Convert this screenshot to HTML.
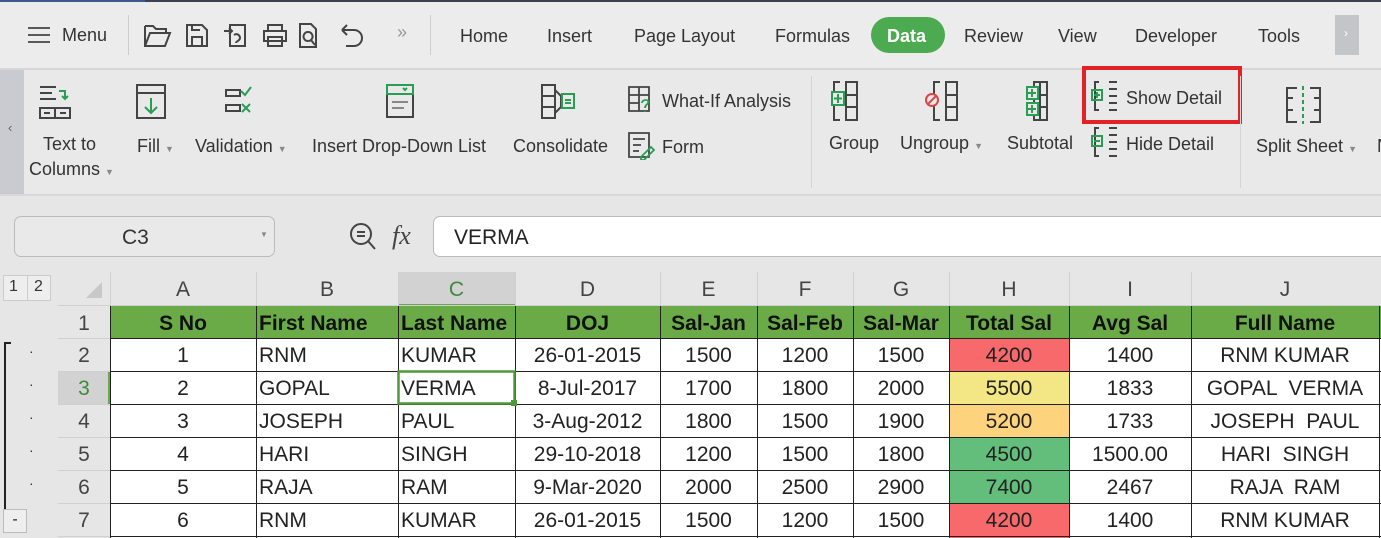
<!DOCTYPE html>
<html><head><meta charset="utf-8"><style>
*{margin:0;padding:0;box-sizing:border-box}
body{width:1381px;height:538px;overflow:hidden;background:#e6e6e6;font-family:"Liberation Sans",sans-serif;color:#222;position:relative}
.abs{position:absolute}
.t{position:absolute;font-size:18px;color:#333;white-space:nowrap}
svg{position:absolute}
.cell{position:absolute;font-size:21px;white-space:pre;overflow:hidden;line-height:35px}
</style></head><body>
<div class="abs" style="left:0;top:0;width:1381px;height:2px;background:#3a4250"></div>
<div class="abs" style="left:0;top:0;width:145px;height:2px;background:#3d5a8f"></div>
<!-- top toolbar -->
<div class="abs" style="left:0;top:2px;width:1381px;height:66px;background:#ececec"></div>
<svg style="left:27px;top:26px" width="24" height="18"><path d="M1 2H23M1 9H23M1 16H23" stroke="#444" stroke-width="1.8"/></svg>
<div class="t" style="left:62px;top:25px">Menu</div>
<div class="abs" style="left:128px;top:15px;width:1px;height:40px;background:#ccc"></div>
<svg style="left:142px;top:20px" width="260" height="32" fill="none" stroke="#444" stroke-width="2">
<path d="M3 6h8l3 3h10v4M3 6v20h20l5-13H8L3 26"/>
<path d="M45 5h15l5 5v16H45zM50 26v-9h10v9M50 5v5h8"/>
<path d="M88 5h15v21H88zM82 11h8M87 8l3 3-3 3M92 15c3-2 6 0 6 3s-4 3-4 5"/>
<path d="M126 5h14v6H126zM122 11h22v10H122zM126 17h14v9H126z"/>
<path d="M158 4h11l5 5v18H158zM166 21a4.5 4.5 0 1 1 0.1 0M169 20l4 5"/>
<path d="M200 10h12a8 8 0 0 1 0 16h-8M200 10l5-5M200 10l5 5"/>
</svg>
<div class="t" style="left:397px;top:22px;color:#999">»</div>
<div class="abs" style="left:430px;top:15px;width:1px;height:40px;background:#ccc"></div>
<div class="t" style="left:460px;top:26px">Home</div>
<div class="t" style="left:547px;top:26px">Insert</div>
<div class="t" style="left:634px;top:26px">Page Layout</div>
<div class="t" style="left:775px;top:26px">Formulas</div>
<div class="abs" style="left:871px;top:17px;width:74px;height:36px;border-radius:18px;background:#4caa50"></div>
<div class="t" style="left:887px;top:26px;color:#fff;font-weight:bold">Data</div>
<div class="t" style="left:964px;top:26px">Review</div>
<div class="t" style="left:1058px;top:26px">View</div>
<div class="t" style="left:1135px;top:26px">Developer</div>
<div class="t" style="left:1258px;top:26px">Tools</div>
<div class="abs" style="left:1335px;top:15px;width:24px;height:40px;background:#c3c5c9"></div>
<div class="t" style="left:1344px;top:26px;font-size:12px;color:#fff">›</div>
<!-- ribbon -->
<div class="abs" style="left:0;top:68px;width:1381px;height:2px;background:#d6d6d6"></div>
<div class="abs" style="left:0;top:70px;width:1381px;height:124px;background:#e9e9e9"></div>
<div class="abs" style="left:0;top:70px;width:24px;height:124px;background:#c9cbd0"></div>
<div class="t" style="left:8px;top:120px;font-size:13px;color:#666">‹</div>
<div class="abs" style="left:0;top:194px;width:1381px;height:2px;background:#d8d8d8"></div>
<svg style="left:30px;top:80px" width="1300" height="50" fill="none" stroke-width="2">
<g stroke="#444"><path d="M10 7h16M10 13h12M10 19h16M10 28h30v10H10zM25 28v10M14 33h6M30 33h6"/></g><path d="M29 11h6v8M32 16l3 3 3-3" stroke="#2a9d55"/>
<path d="M107 5h28v33H107zM107 13h28" stroke="#444"/><path d="M121 18v15M115 27l6 6 6-6" stroke="#2a9d55"/>
<path d="M196 10h14v6H196zM196 25h14v6H196z" stroke="#444"/><path d="M211 11l4 4 6-8M212 24l8 8M220 24l-8 8" stroke="#2a9d55"/>
<path d="M357 5h26v32H357z" stroke="#444"/><path d="M357 5h26v9H357zM373 8l2 2 2-2" stroke="#2a9d55"/><path d="M362 22h16M362 28h12" stroke="#888"/>
<path d="M512 5h13v33H512zM512 16h13M512 27h13M525 10l6 6v11l-6 6" stroke="#444"/><path d="M532 14h12v14H532zM535 20h6M535 23h6" stroke="#2a9d55"/>
</svg>
<div class="t" style="left:43px;top:134px">Text to</div>
<div class="t" style="left:29px;top:159px">Columns <span style="font-size:9px;color:#888">▼</span></div>
<div class="t" style="left:137px;top:136px">Fill <span style="font-size:9px;color:#888">▼</span></div>
<div class="t" style="left:195px;top:136px">Validation <span style="font-size:9px;color:#888">▼</span></div>
<div class="t" style="left:312px;top:136px">Insert Drop-Down List</div>
<div class="t" style="left:513px;top:136px">Consolidate</div>
<svg style="left:627px;top:85px" width="30" height="75" fill="none" stroke-width="1.8"><path d="M2 2h20v24H2zM2 10h20M2 18h10M12 2v24" stroke="#444"/><path d="M15 18c0-4 8-4 6 0-1 2-3 2-3 5M18 26v1" stroke="#2a9d55"/><path d="M2 48h20v24H2zM6 54h12M6 60h8M6 66h6" stroke="#444"/><path d="M14 72l10-10 3 3-10 10h-3z" stroke="#2a9d55"/></svg>
<div class="t" style="left:662px;top:91px">What-If Analysis</div>
<div class="t" style="left:662px;top:137px">Form</div>
<div class="abs" style="left:811px;top:76px;width:1px;height:112px;background:#d4d4d4"></div>
<svg style="left:828px;top:80px" width="420" height="80" fill="none" stroke-width="2">
<path d="M12 2h-6v38h6M18 2h11v38H18zM18 15h11M18 27h11" stroke="#444"/><path d="M4 12h12v13H4zM10 14v9M6 18.5h8" stroke="#2a9d55" fill="#e9e9e9"/>
<path d="M112 2h-6v38h6M118 2h11v38H118zM118 15h11M118 27h11" stroke="#444"/><circle cx="104" cy="20" r="6" stroke="#d9464c" fill="#e9e9e9"/><path d="M100 24l8-8" stroke="#d9464c"/>
<path d="M206 2h13v38H206zM212 2v38M206 15h13M206 27h13" stroke="#444"/><path d="M199 7h11v12H199zM199 23h11v12H199zM204 9v8M200 13h8M204 25v8M200 29h8" stroke="#2a9d55" fill="#e9e9e9"/>
<path d="M271 2h-4v28h4M281 2h8M281 9h8M281 16h8M281 23h8M281 30h8" stroke="#444"/><path d="M264 10h10v10H264zM269 12v6M266 15h6" stroke="#2a9d55"/>
<path d="M271 48h-4v28h4M281 48h8M281 55h8M281 62h8M281 69h8M281 76h8" stroke="#444"/><path d="M264 56h10v10H264zM266 61h6" stroke="#2a9d55"/>
</svg>
<div class="t" style="left:829px;top:133px">Group</div>
<div class="t" style="left:900px;top:133px">Ungroup <span style="font-size:9px;color:#888">▼</span></div>
<div class="t" style="left:1007px;top:133px">Subtotal</div>
<div class="abs" style="left:1082px;top:66px;width:160px;height:58px;border:4px solid #e32228"></div>
<div class="t" style="left:1126px;top:88px">Show Detail</div>
<div class="t" style="left:1126px;top:134px">Hide Detail</div>
<div class="abs" style="left:1240px;top:76px;width:1px;height:112px;background:#d4d4d4"></div>
<svg style="left:1285px;top:86px" width="45" height="40" fill="none" stroke-width="2"><path d="M12 2H2v34h10M25 2h10v34H25M2 12h6M2 24h6M29 12h6M29 24h6" stroke="#444"/><path d="M18 0v38" stroke="#2a9d55" stroke-dasharray="4 3"/></svg>
<div class="t" style="left:1256px;top:136px">Split Sheet <span style="font-size:9px;color:#888">▼</span></div>
<div class="t" style="left:1377px;top:136px">N</div>
<!-- formula bar -->
<div class="abs" style="left:14px;top:216px;width:261px;height:41px;border:1px solid #bbb;border-radius:7px;background:#e9e9e9"></div>
<div class="t" style="left:122px;top:226px;font-size:21px">C3</div>
<div class="t" style="left:260px;top:230px;font-size:8px;color:#888">▼</div>
<svg style="left:348px;top:220px" width="30" height="32" fill="none" stroke="#444" stroke-width="2"><circle cx="13" cy="14" r="10"/><path d="M20 21l7 8M9 12h8M9 16h8"/></svg>
<div class="t" style="left:392px;top:221px;font-size:26px;font-style:italic;font-family:'Liberation Serif',serif;color:#444">fx</div>
<div class="abs" style="left:433px;top:216px;width:960px;height:41px;border:1px solid #bbb;border-radius:7px;background:#fff"></div>
<div class="t" style="left:454px;top:226px;font-size:21px;color:#222">VERMA</div>
<!-- outline -->
<div class="abs" style="left:0;top:270px;width:58px;height:268px;background:#e6e6e6"></div>
<div class="abs" style="left:3px;top:275px;width:48px;height:26px;border:1px solid #ccc;background:#eee"></div>
<div class="abs" style="left:27px;top:275px;width:1px;height:26px;background:#ccc"></div>
<div class="t" style="left:9px;top:278px;font-size:16px">1</div><div class="t" style="left:34px;top:278px;font-size:16px">2</div>
<div class="abs" style="left:4px;top:342px;width:2px;height:167px;background:#222"></div>
<div class="abs" style="left:4px;top:342px;width:7px;height:2px;background:#222"></div>
<div class="abs" style="left:3px;top:509px;width:24px;height:24px;border:1px solid #bbb;background:#eee;text-align:center;font-size:16px;line-height:20px">-</div>
<div class="t" style="left:29px;top:343px;font-size:14px">·</div><div class="t" style="left:29px;top:376px;font-size:14px">·</div><div class="t" style="left:29px;top:409px;font-size:14px">·</div><div class="t" style="left:29px;top:442px;font-size:14px">·</div><div class="t" style="left:29px;top:475px;font-size:14px">·</div>
<!-- grid -->
<div class="abs" style="left:58px;top:272px;width:1323px;height:266px;background:#fff"></div>
<div class="abs" style="left:58px;top:272px;width:1323px;height:34px;background:#e6e6e6"></div>
<div class="abs" style="left:58px;top:272px;width:52px;height:266px;background:#e6e6e6"></div>
<div class="abs" style="left:398px;top:272px;width:117px;height:34px;background:#d2d2d2;border-bottom:2px solid #6aa84f"></div>
<div class="abs" style="left:58px;top:371px;width:52px;height:33px;background:#d2d2d2;border-right:2px solid #6aa84f"></div>
<svg style="left:84px;top:280px" width="20" height="20"><path d="M18 2V18H2z" fill="#c8c8c8"/></svg>
<div class="abs" style="left:110px;top:306px;width:1271px;height:32px;background:#6aab47"></div>
<div class="abs" style="left:949px;top:338px;width:120px;height:33px;background:#f8696b"></div>
<div class="abs" style="left:949px;top:371px;width:120px;height:33px;background:#f3e684"></div>
<div class="abs" style="left:949px;top:404px;width:120px;height:33px;background:#fdd37e"></div>
<div class="abs" style="left:949px;top:437px;width:120px;height:33px;background:#63be7b"></div>
<div class="abs" style="left:949px;top:470px;width:120px;height:33px;background:#63be7b"></div>
<div class="abs" style="left:949px;top:503px;width:120px;height:35px;background:#f8696b"></div>
<svg style="left:0;top:0" width="1381" height="538" stroke="#222" stroke-width="1">
<g stroke="#d0d0d0"><path d="M110.5 272V306M256.5 272V306M398.5 272V306M515.5 272V306M660.5 272V306M757.5 272V306M853.5 272V306M949.5 272V306M1069.5 272V306M1191.5 272V306M58 305.5H1381M58 338.5H110M58 371.5H110M58 404.5H110M58 437.5H110M58 470.5H110M58 503.5H110M58 536.5H110"/></g>
<path d="M110.5 306V538M256.5 306V538M398.5 306V538M515.5 306V538M660.5 306V538M757.5 306V538M853.5 306V538M949.5 306V538M1069.5 306V538M1191.5 306V538M1379.5 306V538M110 338.5H1381M110 371.5H1381M110 404.5H1381M110 437.5H1381M110 470.5H1381M110 503.5H1381M110 536.5H1381"/>
<rect x="398.5" y="371.5" width="116" height="32" fill="none" stroke="#4e9a3a" stroke-width="2.5"/>
<rect x="511" y="400" width="6" height="6" fill="#4e9a3a" stroke="none"/>
</svg>
<div id="cells"></div>
<script>
var cols=[[58,110],[110,256],[256,398],[398,515],[515,660],[660,757],[757,853],[853,949],[949,1069],[1069,1191],[1191,1379]];
var al=['c','c','l','l','c','c','c','c','c','c','c'];
var rows=[["","A","B","C","D","E","F","G","H","I","J"],
["1","S No","First Name","Last Name","DOJ","Sal-Jan","Sal-Feb","Sal-Mar","Total Sal","Avg Sal","Full Name"],
["2","1","RNM","KUMAR","26-01-2015","1500","1200","1500","4200","1400","RNM KUMAR"],
["3","2","GOPAL","VERMA","8-Jul-2017","1700","1800","2000","5500","1833","GOPAL  VERMA"],
["4","3","JOSEPH","PAUL","3-Aug-2012","1800","1500","1900","5200","1733","JOSEPH  PAUL"],
["5","4","HARI","SINGH","29-10-2018","1200","1500","1800","4500","1500.00","HARI  SINGH"],
["6","5","RAJA","RAM","9-Mar-2020","2000","2500","2900","7400","2467","RAJA  RAM"],
["7","6","RNM","KUMAR","26-01-2015","1500","1200","1500","4200","1400","RNM KUMAR"]];
var ys=[272,306,338,371,404,437,470,503];var h='';
rows.forEach(function(r,i){r.forEach(function(v,j){var c=cols[j];var s='left:'+c[0]+'px;top:'+ys[i]+'px;width:'+(c[1]-c[0])+'px;';
var a=(i==0||j==0||i==1&&j!=2&&j!=3)?'center':(al[j]=='l'?'left':'center');s+='text-align:'+a+';';if(a=='left')s+='padding-left:3px;';
if(i==0||j==0)s+='color:#444;';if(i==1&&j>0)s+='font-weight:bold;color:#111;';if((i==0&&j==3)||(j==0&&i==3))s+='color:#3d8b3d;';
h+='<div class="cell" style="'+s+'">'+v+'</div>';});});
document.getElementById('cells').innerHTML=h;
</script>
</body></html>
